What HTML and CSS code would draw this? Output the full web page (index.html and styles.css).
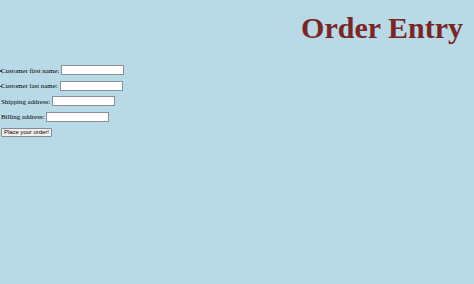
FILE: index.html
```html
<!DOCTYPE html>
<html>
<head>
<meta charset="utf-8">
<title>Order Entry</title>
<link rel="stylesheet" href="styles.css">
</head>
<body>
<h1 class="title">Order Entry</h1>
<form class="order-form">
  <div class="row"><label class="req">Customer first name:</label><input class="field" type="text"></div>
  <div class="row"><label class="req">Customer last name:</label><input class="field" type="text"></div>
  <div class="row"><label>Shipping address:</label><input class="field" type="text"></div>
  <div class="row"><label>Billing address:</label><input class="field" type="text"></div>
  <div class="row"><button class="submit" type="button">Place your order!</button></div>
</form>
</body>
</html>
```
FILE: styles.css
```css
html, body {
  margin: 0;
  padding: 0;
  background: #b8dae6;
}
body {
  font-family: "Liberation Serif", "Times New Roman", serif;
  padding: 0 11px 0 1px;
}
.title {
  margin: 0;
  padding-top: 11px;
  text-align: right;
  font-size: 30px;
  font-weight: bold;
  color: #7b2626;
  line-height: 34px;
}
.order-form {
  margin-top: 20px;
  display: flex;
  flex-direction: column;
  gap: 5.5px;
}
.row {
  display: flex;
  align-items: center;
  gap: 2px;
  height: 10px;
  font-size: 6.9px;
  color: #000;
}
.req {
  position: relative;
}
.req::before {
  content: "";
  position: absolute;
  left: -1px;
  top: 50%;
  width: 1.5px;
  height: 1.5px;
  background: #333;
  border-radius: 50%;
}
.field {
  width: 59px;
  height: 6px;
  padding: 1px;
  margin: 0;
  border: 1px solid #8a8f94;
  background: #fff;
  font-size: 6px;
}
.submit {
  font-family: "Liberation Sans", Arial, sans-serif;
  font-size: 5.9px;
  height: 9px;
  padding: 0 2px;
  margin: 0;
  line-height: 7px;
  border: 1px solid #8a8a8a;
  border-radius: 1px;
  background: #efefef;
  color: #000;
}
```
